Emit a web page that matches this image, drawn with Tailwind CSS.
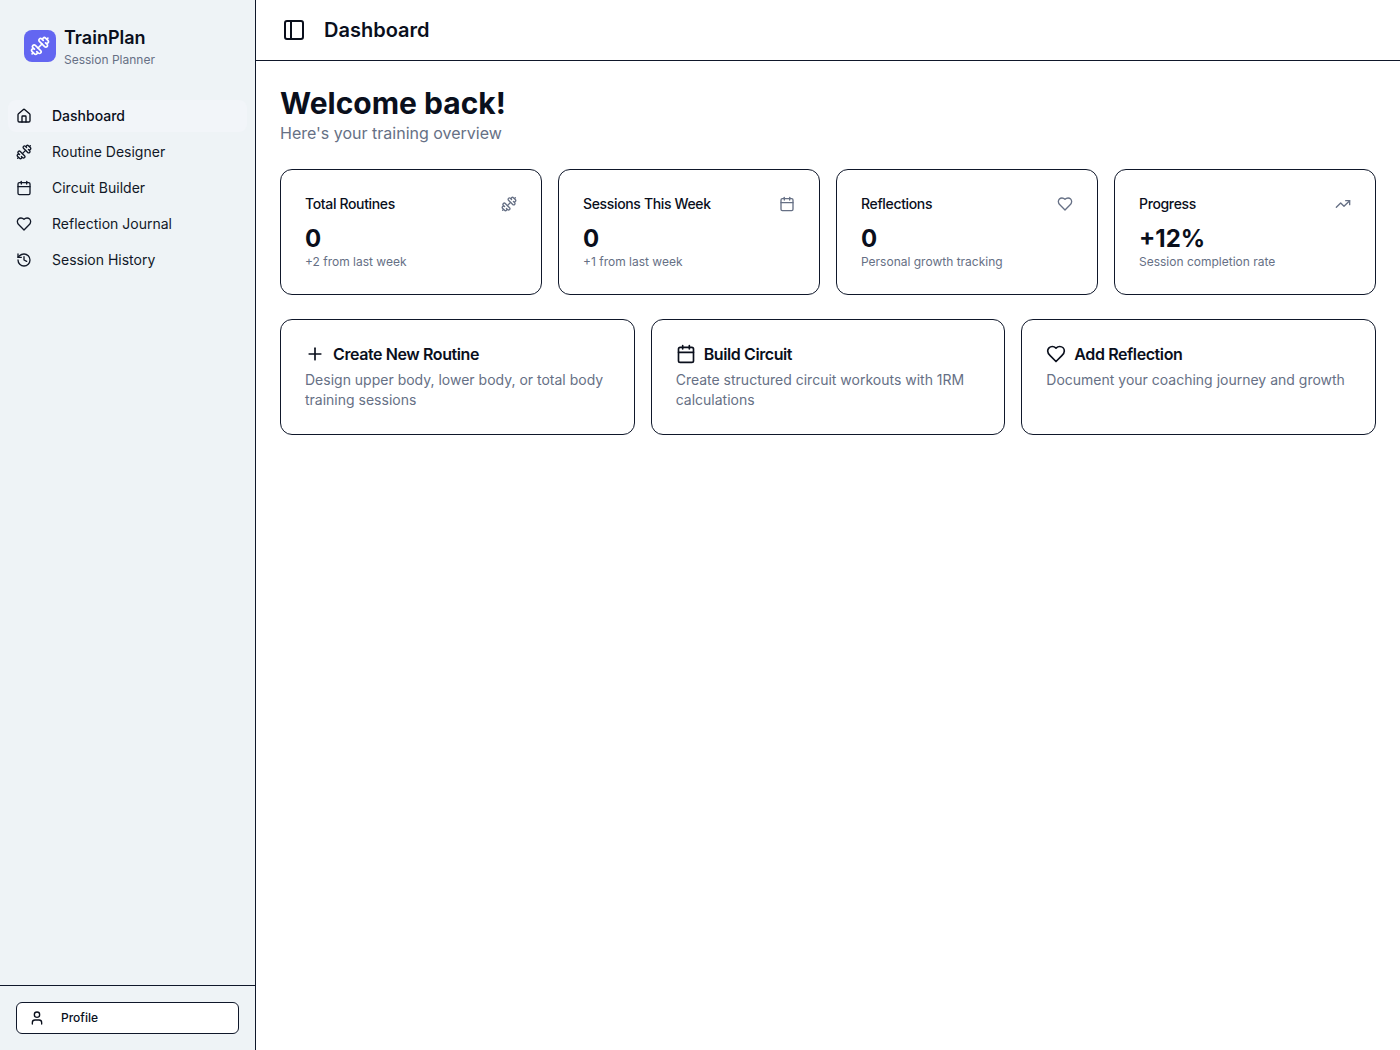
<!DOCTYPE html>
<html lang="en">
<head>
  <meta charset="UTF-8">
  <title>TrainPlan</title>
  <script src="https://cdn.jsdelivr.net/npm/@tailwindcss/browser@4"></script>
</head>
<body class="font-['Inter',sans-serif] bg-white text-[#0a0f1c]">
  <svg class="hidden">
    <symbol id="dumbbell" viewBox="0 0 24 24"><path d="M17.596 12.768a2 2 0 1 0 2.829-2.829l-1.768-1.767a2 2 0 0 0 2.828-2.829l-2.828-2.828a2 2 0 0 0-2.829 2.828l-1.767-1.768a2 2 0 1 0-2.829 2.829z"/><path d="m2.5 21.5 1.4-1.4"/><path d="m20.1 3.9 1.4-1.4"/><path d="M5.343 21.485a2 2 0 1 0 2.829-2.828l1.767 1.768a2 2 0 1 0 2.829-2.829l-6.364-6.364a2 2 0 1 0-2.829 2.829l1.768 1.767a2 2 0 0 0-2.828 2.829z"/><path d="m9.6 14.4 4.8-4.8"/></symbol>
    <symbol id="home" viewBox="0 0 24 24"><path d="M15 21v-8a1 1 0 0 0-1-1h-4a1 1 0 0 0-1 1v8"/><path d="M3 10a2 2 0 0 1 .709-1.528l7-5.999a2 2 0 0 1 2.582 0l7 5.999A2 2 0 0 1 21 10v9a2 2 0 0 1-2 2H5a2 2 0 0 1-2-2z"/></symbol>
    <symbol id="calendar" viewBox="0 0 24 24"><path d="M8 2v4"/><path d="M16 2v4"/><rect width="18" height="18" x="3" y="4" rx="2"/><path d="M3 10h18"/></symbol>
    <symbol id="heart" viewBox="0 0 24 24"><path d="M19 14c1.49-1.46 3-3.21 3-5.5A5.5 5.5 0 0 0 16.5 3c-1.76 0-3 .5-4.5 2-1.5-1.5-2.74-2-4.5-2A5.5 5.5 0 0 0 2 8.5c0 2.3 1.5 4.05 3 5.5l7 7Z"/></symbol>
    <symbol id="history" viewBox="0 0 24 24"><path d="M3 12a9 9 0 1 0 9-9 9.75 9.75 0 0 0-6.74 2.74L3 8"/><path d="M3 3v5h5"/><path d="M12 7v5l4 2"/></symbol>
    <symbol id="user" viewBox="0 0 24 24"><path d="M19 21v-2a4 4 0 0 0-4-4H9a4 4 0 0 0-4 4v2"/><circle cx="12" cy="7" r="4"/></symbol>
    <symbol id="trending" viewBox="0 0 24 24"><polyline points="22 7 13.5 15.5 8.5 10.5 2 17"/><polyline points="16 7 22 7 22 13"/></symbol>
    <symbol id="plus" viewBox="0 0 24 24"><path d="M5 12h14"/><path d="M12 5v14"/></symbol>
    <symbol id="panel" viewBox="0 0 24 24"><rect width="18" height="18" x="3" y="3" rx="2"/><path d="M9 3v18"/></symbol>
  </svg>

  <div class="flex h-[1050px] w-[1400px] overflow-hidden">
    <!-- sidebar -->
    <aside class="flex w-[256px] shrink-0 flex-col border-r border-[#0f172a] bg-[#eef3f6]">
      <div class="flex items-center gap-2 px-6 py-6">
        <div class="flex size-8 items-center justify-center rounded-lg bg-[#6366f1] text-white">
          <svg class="size-5 fill-none stroke-current stroke-2" style="stroke-linecap:round;stroke-linejoin:round"><use href="#dumbbell"/></svg>
        </div>
        <div>
          <div class="text-lg leading-[28px] font-semibold">TrainPlan</div>
          <div class="text-xs leading-[16px] text-[#667085]">Session Planner</div>
        </div>
      </div>
      <nav class="flex flex-col gap-1 px-2 pt-2">
        <a class="flex h-8 items-center gap-5 rounded-lg bg-[#f2f5f9] px-2 text-sm font-medium">
          <svg class="size-4 fill-none stroke-current stroke-2" style="stroke-linecap:round;stroke-linejoin:round"><use href="#home"/></svg>Dashboard
        </a>
        <a class="flex h-8 items-center gap-5 rounded-lg px-2 text-sm text-[#111827]">
          <svg class="size-4 fill-none stroke-current stroke-2" style="stroke-linecap:round;stroke-linejoin:round"><use href="#dumbbell"/></svg>Routine Designer
        </a>
        <a class="flex h-8 items-center gap-5 rounded-lg px-2 text-sm text-[#111827]">
          <svg class="size-4 fill-none stroke-current stroke-2" style="stroke-linecap:round;stroke-linejoin:round"><use href="#calendar"/></svg>Circuit Builder
        </a>
        <a class="flex h-8 items-center gap-5 rounded-lg px-2 text-sm text-[#111827]">
          <svg class="size-4 fill-none stroke-current stroke-2" style="stroke-linecap:round;stroke-linejoin:round"><use href="#heart"/></svg>Reflection Journal
        </a>
        <a class="flex h-8 items-center gap-5 rounded-lg px-2 text-sm text-[#111827]">
          <svg class="size-4 fill-none stroke-current stroke-2" style="stroke-linecap:round;stroke-linejoin:round"><use href="#history"/></svg>Session History
        </a>
      </nav>
      <div class="mt-auto border-t border-[#0f172a] p-4">
        <button class="flex h-8 w-full items-center gap-4 rounded-md border border-[#0f172a] bg-white px-3 text-xs font-medium">
          <svg class="size-4 fill-none stroke-current stroke-2" style="stroke-linecap:round;stroke-linejoin:round"><use href="#user"/></svg>Profile
        </button>
      </div>
    </aside>

    <!-- main -->
    <main class="min-w-0 flex-1">
      <header class="flex h-[61px] items-center gap-[18px] border-b border-[#0f172a] pl-[26px]">
        <svg class="size-6 fill-none stroke-current stroke-2" style="stroke-linecap:round;stroke-linejoin:round"><use href="#panel"/></svg>
        <h1 class="text-xl font-semibold">Dashboard</h1>
      </header>
      <div class="px-6 pt-6">
        <h2 class="text-3xl leading-[36px] font-bold">Welcome back!</h2>
        <p class="text-base leading-[24px] text-[#667085]">Here's your training overview</p>

        <div class="mt-[24px] grid grid-cols-4 gap-4">
          <div class="h-[126px] rounded-xl border border-[#0f172a] px-6 pt-6">
            <div class="flex items-center justify-between">
              <span class="text-sm font-medium tracking-tight">Total Routines</span>
              <svg class="size-4 fill-none stroke-[#667085] stroke-2" style="stroke-linecap:round;stroke-linejoin:round"><use href="#dumbbell"/></svg>
            </div>
            <div class="mt-[10px] text-2xl leading-[30px] font-bold">0</div>
            <div class="text-xs leading-[16px] text-[#667085]">+2 from last week</div>
          </div>
          <div class="h-[126px] rounded-xl border border-[#0f172a] px-6 pt-6">
            <div class="flex items-center justify-between">
              <span class="text-sm font-medium tracking-tight">Sessions This Week</span>
              <svg class="size-4 fill-none stroke-[#667085] stroke-2" style="stroke-linecap:round;stroke-linejoin:round"><use href="#calendar"/></svg>
            </div>
            <div class="mt-[10px] text-2xl leading-[30px] font-bold">0</div>
            <div class="text-xs leading-[16px] text-[#667085]">+1 from last week</div>
          </div>
          <div class="h-[126px] rounded-xl border border-[#0f172a] px-6 pt-6">
            <div class="flex items-center justify-between">
              <span class="text-sm font-medium tracking-tight">Reflections</span>
              <svg class="size-4 fill-none stroke-[#667085] stroke-2" style="stroke-linecap:round;stroke-linejoin:round"><use href="#heart"/></svg>
            </div>
            <div class="mt-[10px] text-2xl leading-[30px] font-bold">0</div>
            <div class="text-xs leading-[16px] text-[#667085]">Personal growth tracking</div>
          </div>
          <div class="h-[126px] rounded-xl border border-[#0f172a] px-6 pt-6">
            <div class="flex items-center justify-between">
              <span class="text-sm font-medium tracking-tight">Progress</span>
              <svg class="size-4 fill-none stroke-[#667085] stroke-2" style="stroke-linecap:round;stroke-linejoin:round"><use href="#trending"/></svg>
            </div>
            <div class="mt-[10px] text-2xl leading-[30px] font-bold">+12%</div>
            <div class="text-xs leading-[16px] text-[#667085]">Session completion rate</div>
          </div>
        </div>

        <div class="mt-6 grid grid-cols-3 gap-4">
          <div class="h-[116px] rounded-xl border border-[#0f172a] px-6 pt-6">
            <div class="flex items-center gap-2 text-base leading-[20px] font-semibold tracking-tight">
              <svg class="size-5 fill-none stroke-current stroke-2" style="stroke-linecap:round;stroke-linejoin:round"><use href="#plus"/></svg>Create New Routine
            </div>
            <p class="mt-[6px] text-sm leading-[20px] text-[#667085]">Design upper body, lower body, or total body training sessions</p>
          </div>
          <div class="h-[116px] rounded-xl border border-[#0f172a] px-6 pt-6">
            <div class="flex items-center gap-2 text-base leading-[20px] font-semibold tracking-tight">
              <svg class="size-5 fill-none stroke-current stroke-2" style="stroke-linecap:round;stroke-linejoin:round"><use href="#calendar"/></svg>Build Circuit
            </div>
            <p class="mt-[6px] text-sm leading-[20px] text-[#667085]">Create structured circuit workouts with 1RM calculations</p>
          </div>
          <div class="h-[116px] rounded-xl border border-[#0f172a] px-6 pt-6">
            <div class="flex items-center gap-2 text-base leading-[20px] font-semibold tracking-tight">
              <svg class="size-5 fill-none stroke-current stroke-2" style="stroke-linecap:round;stroke-linejoin:round"><use href="#heart"/></svg>Add Reflection
            </div>
            <p class="mt-[6px] text-sm leading-[20px] text-[#667085]">Document your coaching journey and growth</p>
          </div>
        </div>
      </div>
    </main>
  </div>
</body>
</html>
